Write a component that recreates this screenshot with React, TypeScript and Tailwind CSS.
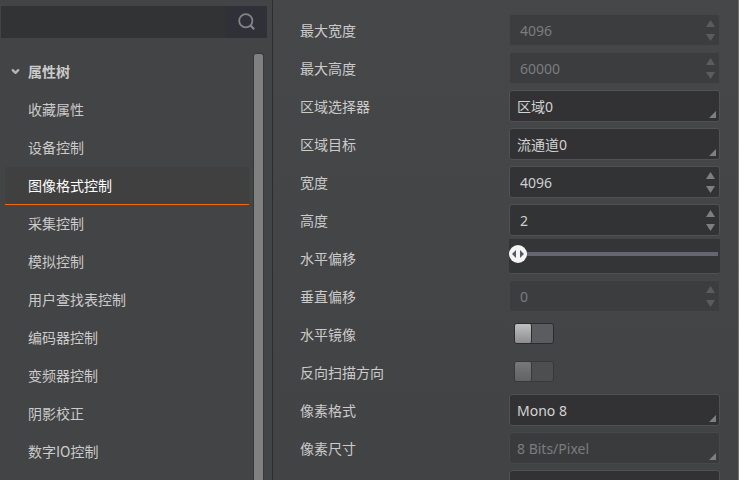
import React, { useState } from 'react';
import { ChevronDown } from 'lucide-react';

interface Property {
  id: string;
  label: string;
  kind: 'number' | 'select' | 'slider' | 'switch';
  value?: string;
  disabled?: boolean;
}

const treeItems: string[] = [
  '收藏属性',
  '设备控制',
  '图像格式控制',
  '采集控制',
  '模拟控制',
  '用户查找表控制',
  '编码器控制',
  '变频器控制',
  '阴影校正',
  '数字IO控制'
];

const properties: Property[] = [
  { id: 'width-max', label: '最大宽度', kind: 'number', value: '4096', disabled: true },
  { id: 'height-max', label: '最大高度', kind: 'number', value: '60000', disabled: true },
  { id: 'region-selector', label: '区域选择器', kind: 'select', value: '区域0' },
  { id: 'region-target', label: '区域目标', kind: 'select', value: '流通道0' },
  { id: 'width', label: '宽度', kind: 'number', value: '4096' },
  { id: 'height', label: '高度', kind: 'number', value: '2' },
  { id: 'offset-x', label: '水平偏移', kind: 'slider' },
  { id: 'offset-y', label: '垂直偏移', kind: 'number', value: '0', disabled: true },
  { id: 'reverse-x', label: '水平镜像', kind: 'switch' },
  { id: 'reverse-scan', label: '反向扫描方向', kind: 'switch', disabled: true },
  { id: 'pixel-format', label: '像素格式', kind: 'select', value: 'Mono 8' },
  { id: 'pixel-size', label: '像素尺寸', kind: 'select', value: '8 Bits/Pixel', disabled: true },
  { id: 'pixel-extra', label: '', kind: 'select', value: '' }
];

const NumberField: React.FC<{ item: Property }> = ({ item }) => {
  const [value, setValue] = useState(item.value ?? '0');
  const step = (delta: number) => setValue((prev) => String(Math.max(0, Number(prev) + delta)));

  return (
    <div
      className={`flex h-8 w-full items-center rounded-[3px] border pr-[3px] ${
        item.disabled ? 'border-[#454648] bg-[#3c3d3f] text-[#7b7c7e]' : 'border-[#505153] bg-[#323335] text-[#cfcfcf]'
      }`}
    >
      <input
        id={item.id}
        type="text"
        inputMode="numeric"
        value={value}
        disabled={item.disabled}
        onChange={(e) => setValue(e.target.value)}
        className="min-w-0 flex-1 bg-transparent pt-0.5 pl-2.5 font-['Noto_Sans','Noto_Sans_CJK_SC',sans-serif] text-sm outline-none"
      />
      <div className={`flex flex-col ${item.disabled ? 'text-[#5b5c5e]' : 'text-[#7e7f80]'}`}>
        <button
          type="button"
          aria-label="增加"
          disabled={item.disabled}
          onClick={() => step(1)}
          className="flex h-3.5 w-[11px] items-center justify-center"
        >
          <svg width="9" height="7" viewBox="0 0 9 7" fill="currentColor">
            <path d="M4.5 0L9 7H0z" />
          </svg>
        </button>
        <button
          type="button"
          aria-label="减少"
          disabled={item.disabled}
          onClick={() => step(-1)}
          className="flex h-3.5 w-[11px] items-center justify-center"
        >
          <svg width="9" height="7" viewBox="0 0 9 7" fill="currentColor">
            <path d="M0 0h9L4.5 7z" />
          </svg>
        </button>
      </div>
    </div>
  );
};

const SelectField: React.FC<{ item: Property }> = ({ item }) => (
  <div className="relative w-full">
    <select
      id={item.id}
      disabled={item.disabled}
      aria-label={item.label || '像素属性'}
      className={`block h-8 w-full appearance-none rounded-[3px] border px-[7px] pt-0.5 font-['Noto_Sans','Noto_Sans_CJK_SC',sans-serif] text-sm opacity-100 outline-none ${
        item.disabled ? 'border-[#464849] bg-[#3a3b3c] text-[#7b7c7e]' : 'border-[#505153] bg-[#323234] text-[#d2d2d2]'
      }`}
    >
      <option>{item.value}</option>
    </select>
    <svg
      className="pointer-events-none absolute right-1 bottom-1 text-[#7e7f80]"
      width="7"
      height="7"
      viewBox="0 0 7 7"
      fill="currentColor"
    >
      <path d="M7 0v7H0z" />
    </svg>
  </div>
);

const SliderField: React.FC<{ item: Property }> = ({ item }) => {
  const [value, setValue] = useState(0);

  return (
    <div className="h-[35px] w-full self-start rounded-b-[3px] border-b border-[#505153] bg-[#343537] pr-0.5">
      <div className="relative flex h-[30px] items-center">
        <input
          id={item.id}
          type="range"
          min={0}
          max={100}
          value={value}
          onChange={(e) => setValue(Number(e.target.value))}
          className="h-[18px] w-full appearance-none bg-transparent outline-none [&::-webkit-slider-runnable-track]:h-1 [&::-webkit-slider-runnable-track]:bg-[#646672] [&::-webkit-slider-thumb]:-mt-[7px] [&::-webkit-slider-thumb]:h-[18px] [&::-webkit-slider-thumb]:w-[18px] [&::-webkit-slider-thumb]:appearance-none [&::-webkit-slider-thumb]:rounded-full [&::-webkit-slider-thumb]:bg-[#f4f4f4]"
        />
        {/* Arrows on the thumb */}
        <svg
          className="pointer-events-none absolute"
          style={{ left: `calc((100% - 18px) * ${value / 100})` }}
          width="18"
          height="18"
          viewBox="0 0 18 18"
          fill="#565864"
        >
          <path d="M7 5v8L3 9zM11 5v8l4-4z" />
        </svg>
      </div>
    </div>
  );
};

const SwitchField: React.FC<{ item: Property }> = ({ item }) => {
  const [on, setOn] = useState(false);

  return (
    <input
      id={item.id}
      type="checkbox"
      role="switch"
      checked={on}
      disabled={item.disabled}
      onChange={() => setOn(!on)}
      className={`mb-px ml-[5px] flex h-[21px] w-10 appearance-none rounded-[3px] border before:h-full before:w-[17px] before:rounded-[2px] before:border-r before:bg-linear-to-b before:content-[''] checked:justify-end ${
        item.disabled
          ? 'border-[#38393a] bg-[#4d4e50] before:border-[#38393a] before:from-[#777879] before:to-[#626262]'
          : 'border-[#2b2c2d] bg-[#5b5c60] before:border-[#2b2c2d] before:from-[#c0c0c0] before:to-[#8d8d8d]'
      }`}
    />
  );
};

const PropertyRow: React.FC<{ item: Property }> = ({ item }) => (
  <div className="flex h-[38px] shrink-0 items-center">
    <label htmlFor={item.id} className="w-[209px] shrink-0 text-sm text-[#cbcbcb]">
      {item.label}
    </label>
    <div className="flex h-full min-w-0 flex-1 items-center">
      {item.kind === 'number' && <NumberField item={item} />}
      {item.kind === 'select' && <SelectField item={item} />}
      {item.kind === 'slider' && <SliderField item={item} />}
      {item.kind === 'switch' && <SwitchField item={item} />}
    </div>
  </div>
);

const App: React.FC = () => {
  const [selected, setSelected] = useState('图像格式控制');

  return (
    <div className="flex h-screen overflow-hidden bg-[#434445] font-['Noto_Sans_CJK_SC',sans-serif] text-[#cbcbcb]">
      {/* Property tree */}
      <aside className="flex w-[273px] shrink-0 flex-col border-r border-[#2c2d2f] pt-1.5">
        <form className="mr-[5px] ml-px flex h-8 shrink-0" onSubmit={(e) => e.preventDefault()}>
          <input
            type="search"
            aria-label="搜索属性"
            className="min-w-0 flex-1 bg-[#323334] px-2 text-sm outline-none"
          />
          <button type="submit" aria-label="搜索" className="flex w-[41px] items-center justify-center bg-[#2f3038] text-[#838486]">
            <svg width="18" height="18" viewBox="0 0 18 18" fill="none" stroke="currentColor" strokeWidth="1.8">
              <circle cx="7.8" cy="7.8" r="6.6" />
              <path d="M12.4 12.4l3.8 3.8" strokeWidth="2.2" />
            </svg>
          </button>
        </form>

        <div className="mt-[15px] flex min-h-0 flex-1 pr-2">
          <nav className="min-w-0 flex-1 pr-1 pl-[5px]">
            <button type="button" className="flex h-[38px] w-full items-center gap-[7px] pb-0.5 pl-[5px] text-sm font-bold">
              <ChevronDown className="h-[11px] w-[11px] text-[#b4b5b6]" strokeWidth={5} />
              属性树
            </button>
            {treeItems.map((name) => (
              <button
                key={name}
                type="button"
                onClick={() => setSelected(name)}
                className={`block h-[38px] w-full border-b pb-0.5 pl-[23px] text-left text-sm ${
                  name === selected ? 'border-[#f26a0a] bg-[#3f403f] text-white' : 'border-transparent'
                }`}
              >
                {name}
              </button>
            ))}
          </nav>
          <div className="w-[11px] rounded-t-[3px] border border-b-0 border-[#37383a] bg-[#808080]"></div>
        </div>
      </aside>

      {/* Property values */}
      <main className="flex min-w-0 flex-1 flex-col border-r border-[#77706b] bg-linear-to-b from-[#464749] to-[#424344] pt-[11px] pr-[18px] pl-[27px]">
        {properties.map((item) => (
          <PropertyRow key={item.id} item={item} />
        ))}
      </main>
    </div>
  );
};

export default App;
